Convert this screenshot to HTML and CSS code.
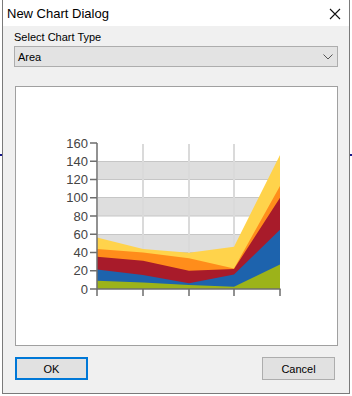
FILE: index.html
```html
<!DOCTYPE html>
<html lang="en">
<head>
    <meta charset="UTF-8">
    <title>New Chart Dialog</title>
    <link rel="stylesheet" href="styles.css">
</head>
<body>
    <div class="dialog">
        <div class="title-bar">
            <span class="title">New Chart Dialog</span>
            <svg class="close" width="12" height="12" viewBox="0 0 12 12">
                <path d="M1 1 L11 11 M11 1 L1 11" stroke="#111" stroke-width="1.1" fill="none"/>
            </svg>
        </div>

        <div class="content">
            <div class="field-label">Select Chart Type</div>
            <div class="combo">
                <span>Area</span>
                <svg class="chevron" width="10" height="6" viewBox="0 0 10 6">
                    <path d="M0.5 0.5 L5 5 L9.5 0.5" stroke="#555" stroke-width="1" fill="none"/>
                </svg>
            </div>

            <div class="preview">
                <!-- viewBox uses the page coordinates of the panel's inside -->
                <svg class="chart" width="321" height="258" viewBox="16 87 321 258">
                    <g fill="#dedede">
                        <rect x="98" y="161.25" width="182" height="18.25"/>
                        <rect x="98" y="197.75" width="182" height="18.25"/>
                        <rect x="98" y="234.25" width="182" height="18.25"/>
                        <rect x="98" y="270.75" width="182" height="18.25"/>
                    </g>
                    <g stroke="#c6c6c6" stroke-width="1">
                        <line x1="98" y1="161.5" x2="280" y2="161.5"/>
                        <line x1="98" y1="179.5" x2="280" y2="179.5"/>
                        <line x1="98" y1="197.5" x2="280" y2="197.5"/>
                        <line x1="98" y1="216" x2="280" y2="216"/>
                        <line x1="98" y1="234.5" x2="280" y2="234.5"/>
                        <line x1="98" y1="252.5" x2="280" y2="252.5"/>
                        <line x1="98" y1="270.5" x2="280" y2="270.5"/>
                    </g>
                    <g stroke="#dadada" stroke-width="2">
                        <line x1="143" y1="144" x2="143" y2="289"/>
                        <line x1="189" y1="144" x2="189" y2="289"/>
                        <line x1="234" y1="144" x2="234" y2="289"/>
                    </g>

                    <polygon fill="#ffd34b" points="97,237.4 143,249 189,252.7 234,246.7 280,155 280,289 97,289"/>
                    <polygon fill="#ff8d1b" points="97,249 143,252.5 189,258.3 234,268.4 280,185.9 280,289 97,289"/>
                    <polygon fill="#a81b2a" points="97,256.7 143,260.7 189,270.75 234,268.9 280,197.75 280,289 97,289"/>
                    <polygon fill="#1d63ad" points="97,269.4 143,275 189,283.3 234,274.4 280,229.7 280,289 97,289"/>
                    <polygon fill="#9cb31a" points="97,280.8 143,282.6 189,284.9 234,286.7 280,264.4 280,289 97,289"/>

                    <g stroke="#6e6e6e" stroke-width="1.5" fill="none">
                        <line x1="97" y1="143" x2="97" y2="289.5"/>
                        <line x1="97" y1="289" x2="280.5" y2="289"/>
                        <path d="M90 143 H97 M90 161.25 H97 M90 179.5 H97 M90 197.75 H97 M90 216 H97 M90 234.25 H97 M90 252.5 H97 M90 270.75 H97 M90 289 H97"/>
                        <path d="M97 289 V296 M143 289 V296 M189 289 V296 M234 289 V296 M280 289 V296"/>
                    </g>
                    <g class="axis-labels" text-anchor="end">
                        <text x="88" y="147.5">160</text>
                        <text x="88" y="165.75">140</text>
                        <text x="88" y="184">120</text>
                        <text x="88" y="202.25">100</text>
                        <text x="88" y="220.5">80</text>
                        <text x="88" y="238.75">60</text>
                        <text x="88" y="257">40</text>
                        <text x="88" y="275.25">20</text>
                        <text x="88" y="293.5">0</text>
                    </g>
                </svg>
            </div>

            <div class="buttons">
                <button class="btn btn-default">OK</button>
                <button class="btn">Cancel</button>
            </div>
        </div>
    </div>
</body>
</html>
```

FILE: styles.css
```css
* {
    margin: 0;
    padding: 0;
    box-sizing: border-box;
}

body {
    width: 352px;
    height: 396px;
    background: linear-gradient(#15158a, #15158a) 0 154px / 100% 2px no-repeat, #ffffff;
    font-family: "Liberation Sans", Arial, sans-serif;
    color: #000000;
}

.dialog {
    width: 348px;
    height: 394px;
    margin-left: 2px;
    background-color: #f0f0f0;
    border: 1px solid #7a7a7a;
    border-top: none;
    display: flex;
    flex-direction: column;
}

.title-bar {
    height: 26px;
    background-color: #ffffff;
    display: flex;
    align-items: center;
    justify-content: space-between;
    padding: 0 8px 0 4px;
}

.title {
    font-size: 13px;
    padding-top: 1px;
}

.close {
    display: block;
    margin-top: 1px;
}

.content {
    flex: 1;
    padding: 3px 11px 0 11px;
    display: flex;
    flex-direction: column;
}

.field-label {
    font-size: 11px;
    line-height: 16px;
}

.combo {
    margin-top: 1px;
    height: 21px;
    background-color: #e3e3e3;
    border: 1px solid #adadad;
    display: flex;
    align-items: center;
    justify-content: space-between;
    padding: 0 4px 0 3px;
    font-size: 11px;
}

.chevron {
    display: block;
    margin-top: 1px;
}

.preview {
    margin: 19px 0 0 1px;
    height: 260px;
    background-color: #ffffff;
    border: 1px solid #a0a0a0;
}

.chart {
    display: block;
}

.axis-labels {
    font-family: "Liberation Sans", Arial, sans-serif;
    font-size: 13px;
    fill: #444444;
}

.buttons {
    margin: 11px 3px 0 1px;
    display: flex;
    justify-content: space-between;
}

.btn {
    width: 73px;
    height: 23px;
    background-color: #e1e1e1;
    border: 1px solid #adadad;
    font-family: "Liberation Sans", Arial, sans-serif;
    font-size: 11px;
    color: #000000;
}

.btn-default {
    border: 2px solid #0078d7;
}
```
